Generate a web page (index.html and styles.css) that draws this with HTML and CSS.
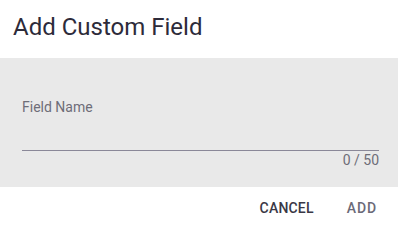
FILE: index.html
```html
<!DOCTYPE html>
<html>
<head>
<meta charset="utf-8">
<link rel="stylesheet" href="styles.css">
</head>
<body>
<div class="dialog">
  <div class="title">Add Custom Field</div>
  <div class="content">
    <div class="field">
      <div class="label">Field Name</div>
      <div class="input"></div>
      <div class="counter">0 / 50</div>
    </div>
  </div>
  <div class="actions">
    <button class="btn btn-cancel">CANCEL</button>
    <button class="btn btn-add">ADD</button>
  </div>
</div>
</body>
</html>
```
FILE: styles.css
```css
html, body {
  margin: 0;
  padding: 0;
  background: #ffffff;
  font-family: Roboto, "Liberation Sans", sans-serif;
}
.dialog {
  width: 398px;
  height: 222px;
  display: flex;
  flex-direction: column;
}
.title {
  height: 58px;
  box-sizing: border-box;
  padding: 13px 0 0 13px;
  font-size: 24px;
  line-height: 28px;
  color: #2d2b3a;
  font-weight: 400;
}
.content {
  height: 129px;
  background: #e9e9e9;
  box-sizing: border-box;
  padding: 41px 19px 0 22px;
}
.field {
  display: flex;
  flex-direction: column;
}
.label {
  font-size: 14px;
  line-height: 16px;
  color: #6e6d78;
}
.input {
  height: 35px;
  border-bottom: 1px solid #8a8898;
}
.counter {
  align-self: flex-end;
  font-size: 14px;
  line-height: 16px;
  margin-top: 1px;
  color: #6e6d78;
}
.actions {
  flex: 1;
  display: flex;
  justify-content: flex-end;
  align-items: flex-start;
  padding: 13px 21px 0 0;
  gap: 33px;
}
.btn {
  background: none;
  border: none;
  font-family: Roboto, "Liberation Sans", sans-serif;
  font-size: 14px;
  font-weight: 500;
  padding: 0;
  line-height: 16px;
  letter-spacing: 0.2px;
}
.btn-cancel { color: #3a3846; }
.btn-add { color: #6c6a78; letter-spacing: 0.9px; }
```
